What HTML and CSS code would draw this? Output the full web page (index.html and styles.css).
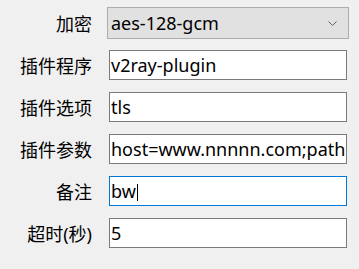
FILE: index.html
```html
<!DOCTYPE html>
<html lang="zh">
<head>
  <meta charset="UTF-8">
  <meta name="viewport" content="width=device-width, initial-scale=1.0">
  <title>插件设置</title>
  <link rel="stylesheet" href="styles.css">
</head>
<body>

  <div id="form">
    <label class="lbl">加密</label>
    <div class="combo">
      <span>aes-128-gcm</span>
      <svg class="chevron" width="9" height="6" viewBox="0 0 9 6">
        <polyline points="0.5,0.5 4.5,4.5 8.5,0.5" fill="none" stroke="#606060" stroke-width="1"/>
      </svg>
    </div>

    <label class="lbl">插件程序</label>
    <div class="field">v2ray-plugin</div>

    <label class="lbl">插件选项</label>
    <div class="field">tls</div>

    <label class="lbl">插件参数</label>
    <div class="field">host=www.nnnnn.com;path=/ws</div>

    <label class="lbl">备注</label>
    <div class="field active">bw<span class="caret"></span></div>

    <label class="lbl">超时<span class="paren">(</span>秒<span class="paren">)</span></label>
    <div class="field">5</div>
  </div>

</body>
</html>
```

FILE: styles.css
```css
body {
  margin: 0;
  background: #f0f0f0;
  font-family: "Noto Sans", "Noto Sans CJK SC", sans-serif;
  font-size: 18px;
  color: #000;
}

#form {
  display: grid;
  grid-template-columns: 92px 1fr;
  grid-auto-rows: 30px;
  column-gap: 17px;
  row-gap: 12px;
  padding: 8px 12px 0 0;
}

.lbl {
  text-align: right;
  align-self: center;
  font-family: "Noto Sans CJK SC", sans-serif;
  line-height: 30px;
  white-space: nowrap;
}

.lbl .paren {
  font-family: "Noto Sans", sans-serif;
}

.combo {
  margin: -1px -2px -1px -2px;
  height: 30px;
  border: 1px solid #adadad;
  background: #e1e1e1;
  display: flex;
  align-items: center;
  justify-content: space-between;
  padding: 0 11px 0 3px;
}

.combo span {
  line-height: 30px;
}

.chevron {
  display: block;
  margin-top: 1px;
}

.field {
  box-sizing: border-box;
  height: 30px;
  border: 1px solid #7a7a7a;
  background: #fff;
  padding: 0 2px 0 1px;
  line-height: 28px;
  white-space: nowrap;
  overflow: hidden;
}

.field.active {
  border-color: #0078d7;
}

.caret {
  display: inline-block;
  width: 1px;
  height: 17px;
  background: #000;
  vertical-align: -3px;
  margin-left: 1px;
}
```
